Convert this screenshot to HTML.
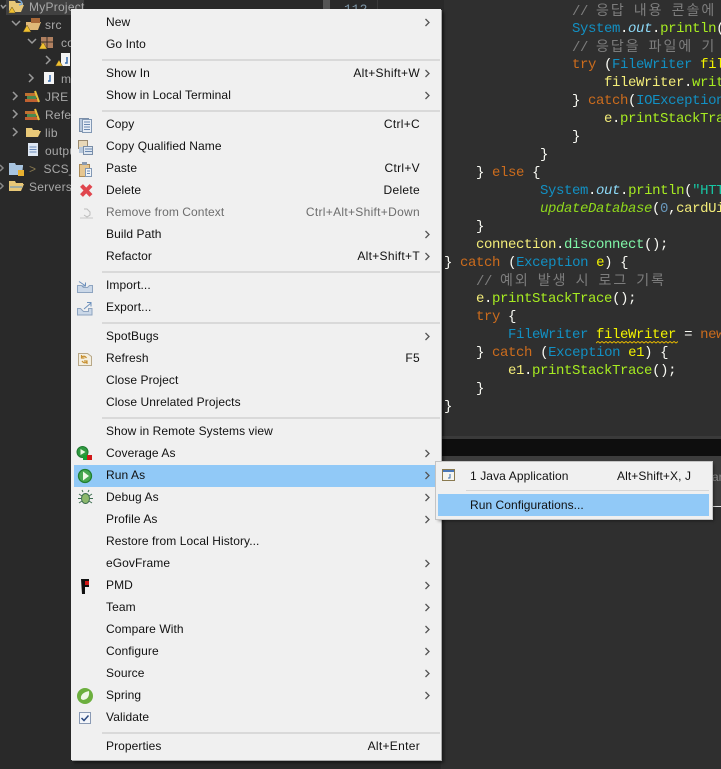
<!DOCTYPE html>
<html><head><meta charset="utf-8"><style>
html,body{margin:0;padding:0;background:#2f2f2f}
#r{position:relative;width:721px;height:769px;overflow:hidden;background:#2f2f2f}
.a{position:absolute}
#c div{position:absolute;white-space:pre;font:14px/18px "Liberation Mono",monospace;letter-spacing:-.4px;color:#d9e8f7;height:18px}
.k{font-family:"Noto Sans CJK KR",sans-serif;font-size:14px;letter-spacing:2px}
.cm{color:#7d7d7d}.t{color:#1290c3}.kw{color:#cc6c1d}.m{color:#a7ec21}.v{color:#f3ec79}.d{color:#f2f200}.w{color:#f9faf4}.o{color:#8ddaf8;font-style:italic}.s{color:#17c6a3}.i{font-style:italic;color:#8fd81c}.n{color:#6897bb}.g{color:#80f6a7}
#t div{position:absolute;white-space:pre;font:12px/16px "Liberation Sans",sans-serif;color:#a8a8a8;letter-spacing:.25px}
#m{position:absolute;left:71px;top:9px;width:370px;height:751px;background:#f0f0f0;box-shadow:1px 1px 0 #aaa,3px 3px 3px rgba(0,0,0,.45)}
.x{position:absolute;left:106px;white-space:pre;font:12px/22px "Liberation Sans",sans-serif;color:#111;letter-spacing:.08px;height:22px}
.r{position:absolute;right:301px;white-space:pre;font:12px/22px "Liberation Sans",sans-serif;color:#111;letter-spacing:.3px;height:22px}
.sp{position:absolute;left:102px;width:338px;height:2px;background:#d9d9d9}
.h{position:absolute;background:#91c9f7}
</style></head><body><div id="r">
<div class="a" style="left:0;top:0;width:444px;height:769px;background:#292929"></div>
<div class="a" style="left:6px;top:0;width:78px;height:15px;background:#404040"></div>
<div class="a" style="left:323px;top:0;width:7px;height:12px;background:#555"></div>
<div class="a" style="left:377px;top:0;width:1px;height:12px;background:#3a3a3a"></div>
<div class="a" style="left:344px;top:3px;font:13px/14px 'Liberation Mono',monospace;color:#7f97a8">112</div>

<div id="c">
<div style="left:572px;top:1px"><span class="cm">// <span class="k">응답</span> <span class="k">내용</span> <span class="k">콘솔에</span></span></div>
<div style="left:572px;top:20px"><span class="t">System</span><span class="w">.</span><span class="o">out</span><span class="w">.</span><span class="m">println</span><span class="w">(</span></div>
<div style="left:572px;top:37px"><span class="cm">// <span class="k">응답을</span> <span class="k">파일에</span> <span class="k">기</span></span></div>
<div style="left:572px;top:56px"><span class="kw">try</span> <span class="w">(</span><span class="t">FileWriter</span> <span class="d">fil</span></div>
<div style="left:604px;top:74px"><span class="v">fileWriter</span><span class="w">.</span><span class="m">writ</span></div>
<div style="left:572px;top:92px"><span class="w">}</span> <span class="kw">catch</span><span class="w">(</span><span class="t">IOException</span></div>
<div style="left:604px;top:110px"><span class="v">e</span><span class="w">.</span><span class="m">printStackTra</span></div>
<div style="left:572px;top:128px"><span class="w">}</span></div>
<div style="left:540px;top:146px"><span class="w">}</span></div>
<div style="left:476px;top:164px"><span class="w">}</span> <span class="kw">else</span> <span class="w">{</span></div>
<div style="left:540px;top:182px"><span class="t">System</span><span class="w">.</span><span class="o">out</span><span class="w">.</span><span class="m">println</span><span class="w">(</span><span class="s">"HTT</span></div>
<div style="left:540px;top:200px"><span class="i">updateDatabase</span><span class="w">(</span><span class="n">0</span><span class="w">,</span><span class="v">cardUi</span></div>
<div style="left:476px;top:218px"><span class="w">}</span></div>
<div style="left:476px;top:236px"><span class="v">connection</span><span class="w">.</span><span class="g">disconnect</span><span class="w">();</span></div>
<div style="left:444px;top:254px"><span class="w">}</span> <span class="kw">catch</span> <span class="w">(</span><span class="t">Exception</span> <span class="d">e</span><span class="w">) {</span></div>
<div style="left:476px;top:271px"><span class="cm">// <span class="k">예외</span> <span class="k">발생</span> <span class="k">시</span> <span class="k">로그</span> <span class="k">기록</span></span></div>
<div style="left:476px;top:290px"><span class="v">e</span><span class="w">.</span><span class="m">printStackTrace</span><span class="w">();</span></div>
<div style="left:476px;top:308px"><span class="kw">try</span> <span class="w">{</span></div>
<div style="left:508px;top:326px"><span class="t">FileWriter</span> <span class="d">fileWriter</span> <span class="w">=</span> <span class="kw">new</span></div>
<div style="left:476px;top:344px"><span class="w">}</span> <span class="kw">catch</span> <span class="w">(</span><span class="t">Exception</span> <span class="d">e1</span><span class="w">) {</span></div>
<div style="left:508px;top:362px"><span class="v">e1</span><span class="w">.</span><span class="m">printStackTrace</span><span class="w">();</span></div>
<div style="left:476px;top:380px"><span class="w">}</span></div>
<div style="left:444px;top:398px"><span class="w">}</span></div>
</div>
<svg class="a" style="left:596px;top:341px" width="82" height="4"><path d="M0 2l2-1.500 2 1.500 2-1.500 2 1.500 2-1.500 2 1.500 2-1.500 2 1.500 2-1.500 2 1.500 2-1.500 2 1.500 2-1.500 2 1.500 2-1.500 2 1.500 2-1.500 2 1.500 2-1.500 2 1.500 2-1.500 2 1.500 2-1.500 2 1.500 2-1.500 2 1.500 2-1.500 2 1.500 2-1.500 2 1.500 2-1.500 2 1.500 2-1.500 2 1.500 2-1.500 2 1.500 2-1.500 2 1.500 2-1.500 2 1.500 2-1.500" fill="none" stroke="#e6b800" stroke-width="1"/></svg>

<div class="a" style="left:441px;top:436px;width:280px;height:3px;background:#3a3a3a"></div>
<div class="a" style="left:441px;top:439px;width:280px;height:17px;background:#0e0e0e"></div>
<div class="a" style="left:441px;top:456px;width:280px;height:50px;background:#3c3c3c"></div>
<div class="a" style="left:441px;top:506px;width:280px;height:1px;background:#e0e0e0"></div>
<div class="a" style="left:441px;top:507px;width:280px;height:262px;background:#2f2f2f"></div>
<div class="a" style="left:712px;top:469px;font:12px/16px 'Liberation Sans',sans-serif;color:#888">ar</div>

<div id="t">
<div style="left:29px;top:-1px">MyProject</div>
<div style="left:45px;top:17px">src</div>
<div style="left:61px;top:35px">co</div>
<div style="left:61px;top:71px">m</div>
<div style="left:45px;top:89px">JRE S</div>
<div style="left:45px;top:107px">Refer</div>
<div style="left:45px;top:125px">lib</div>
<div style="left:45px;top:143px">outpu</div>
<div style="left:29px;top:161px;color:#8a7a50">&gt;  <span style="color:#a8a8a8">SCS_2</span></div>
<div style="left:29px;top:179px">Servers</div>
</div>

<svg class="a" style="left:0;top:0" width="80" height="200" fill="none">
<g stroke="#9a9a9a" stroke-width="1.500"><path d="M1 5l2 3 3-3M12 21l4 4 4-4M28 39l4 4 4-4M46 56l4 4-4 4M29 74l4 4-4 4M13 92l4 4-4 4M13 110l4 4-4 4M13 128l4 4-4 4"/></g>
<path d="M0 165l3 3-3 3M0 183l3 3-3 3" stroke="#888" stroke-width="1.500"/>
<path d="M9 1h6l1 2h7v3H9zM9 5h15l-3 7H9z" fill="#e8c878"/>
<path d="M18 0q4 1 4 4l-3 1" stroke="#7aa8d8" stroke-width="1.500"/>
<path d="M12 7l3.500 6h-7z" fill="#f0c030" stroke="#5a4a20" stroke-width=".5"/>
<path d="M26 22h15l-3 8H26z" fill="#e0b878"/><path d="M31 18h9v5h-9z" fill="#a86838"/>
<path d="M27 25l4 7h-8z" fill="#f0c030" stroke="#5a4a20" stroke-width=".5"/>
<path d="M41 37h12v11H41z" fill="#b08060"/><path d="M47 37v11M41 42h12" stroke="#3a3028"/>
<path d="M43 42l4 7h-8z" fill="#f0c030" stroke="#5a4a20" stroke-width=".5"/>
<rect x="61" y="53" width="9" height="13" fill="#f4f4f4"/><path d="M67 57v6h-2" stroke="#3a6fb0" stroke-width="1.500"/>
<path d="M59 60l3.500 6h-7z" fill="#f0c030" stroke="#5a4a20" stroke-width=".5"/>
<rect x="44" y="72" width="10" height="12" fill="#f4f4f4"/><path d="M50 75v6h-2" stroke="#3a6fb0" stroke-width="1.500"/>
<path d="M25 93h11v3H25z" fill="#c07030"/><path d="M27 96h9v3h-9z" fill="#4a8a50"/><path d="M25 99h14v3H25z" fill="#c06030"/><path d="M35 91l4 11" stroke="#e8c040" stroke-width="2"/>
<path d="M25 111h11v3H25z" fill="#c07030"/><path d="M27 114h9v3h-9z" fill="#4a8a50"/><path d="M25 117h14v3H25z" fill="#c06030"/><path d="M35 109l4 11" stroke="#e8c040" stroke-width="2"/>
<path d="M26 128h6l1 2h6v2H26zM26 131h15l-3 6H26z" fill="#e8c878"/>
<rect x="28" y="143" width="10" height="13" fill="#dfe8f4"/><path d="M29.500 147h7M29.500 149.500h7M29.500 152h7" stroke="#6a8ab8"/>
<path d="M9 163h6l1 2h7v2H9zM9 166h14l-1 9H9z" fill="#a8c4e0"/><rect x="18" y="170" width="6" height="6" fill="#e8b030"/>
<path d="M9 181h6l1 2h7v2H9zM9 184h15l-3 7H9z" fill="#e8c878"/><path d="M10 187h12" stroke="#5a90c8"/>
</svg>

<div id="m"></div>
<div class="h" style="left:74px;top:465px;width:366px;height:22px"></div>

<div class="sp" style="top:59px"></div><div class="sp" style="top:110px"></div><div class="sp" style="top:271px"></div><div class="sp" style="top:322px"></div><div class="sp" style="top:417px"></div><div class="sp" style="top:732px"></div>

<div class="x" style="top:11px">New</div>
<div class="x" style="top:33px">Go Into</div>
<div class="x" style="top:62px">Show In</div><div class="r" style="top:62px">Alt+Shift+W</div>
<div class="x" style="top:84px">Show in Local Terminal</div>
<div class="x" style="top:113px">Copy</div><div class="r" style="top:113px">Ctrl+C</div>
<div class="x" style="top:135px">Copy Qualified Name</div>
<div class="x" style="top:157px">Paste</div><div class="r" style="top:157px">Ctrl+V</div>
<div class="x" style="top:179px">Delete</div><div class="r" style="top:179px">Delete</div>
<div class="x" style="top:201px;color:#6d6d6d">Remove from Context</div><div class="r" style="top:201px;color:#6d6d6d">Ctrl+Alt+Shift+Down</div>
<div class="x" style="top:223px">Build Path</div>
<div class="x" style="top:245px">Refactor</div><div class="r" style="top:245px">Alt+Shift+T</div>
<div class="x" style="top:274px">Import...</div>
<div class="x" style="top:296px">Export...</div>
<div class="x" style="top:325px">SpotBugs</div>
<div class="x" style="top:347px">Refresh</div><div class="r" style="top:347px">F5</div>
<div class="x" style="top:369px">Close Project</div>
<div class="x" style="top:391px">Close Unrelated Projects</div>
<div class="x" style="top:420px">Show in Remote Systems view</div>
<div class="x" style="top:442px">Coverage As</div>
<div class="x" style="top:464px">Run As</div>
<div class="x" style="top:486px">Debug As</div>
<div class="x" style="top:508px">Profile As</div>
<div class="x" style="top:530px">Restore from Local History...</div>
<div class="x" style="top:552px">eGovFrame</div>
<div class="x" style="top:574px">PMD</div>
<div class="x" style="top:596px">Team</div>
<div class="x" style="top:618px">Compare With</div>
<div class="x" style="top:640px">Configure</div>
<div class="x" style="top:662px">Source</div>
<div class="x" style="top:684px">Spring</div>
<div class="x" style="top:706px">Validate</div>
<div class="x" style="top:735px">Properties</div><div class="r" style="top:735px">Alt+Enter</div>

<svg class="a" style="left:0;top:0;pointer-events:none" width="721" height="769" fill="none">
<path d="M425.500 19l3.500 3.500-3.500 3.500M425.500 70l3.500 3.500-3.500 3.500M425.500 92l3.500 3.500-3.500 3.500M425.500 231l3.500 3.500-3.500 3.500M425.500 253l3.500 3.500-3.500 3.500M425.500 333l3.500 3.500-3.500 3.500M425.500 450l3.500 3.500-3.500 3.500M425.500 472l3.500 3.500-3.500 3.500M425.500 494l3.500 3.500-3.500 3.500M425.500 516l3.500 3.500-3.500 3.500M425.500 560l3.500 3.500-3.500 3.500M425.500 582l3.500 3.500-3.500 3.500M425.500 604l3.500 3.500-3.500 3.500M425.500 626l3.500 3.500-3.500 3.500M425.500 648l3.500 3.500-3.500 3.500M425.500 670l3.500 3.500-3.500 3.500M425.500 692l3.500 3.500-3.500 3.500" stroke="#555" stroke-width="1.300"/>
<!-- copy -->
<rect x="79.500" y="118.500" width="9" height="13" fill="#b8c8dc" stroke="#7a8ea8"/><rect x="82.500" y="119.500" width="9" height="13" fill="#e8eef6" stroke="#8298b4"/><path d="M84 122h6M84 124.500h6M84 127h6M84 129.500h6" stroke="#6a88b0"/>
<!-- copy qualified -->
<rect x="78.500" y="140.500" width="9" height="8" fill="#e8d8b8" stroke="#9a8a70"/><rect x="79" y="147" width="6" height="6" fill="#b8c8dc"/><rect x="83.500" y="146.500" width="9" height="8" fill="#dde6f0" stroke="#7a8ea8"/><path d="M85 149h7M85 151.500h7" stroke="#6a88b0"/>
<!-- paste -->
<rect x="79.500" y="164.500" width="10" height="12" fill="#e6c690" stroke="#a88a58"/><rect x="82" y="162" width="5" height="3" fill="#8a9ab0"/><rect x="85.500" y="168.500" width="6" height="8" fill="#f0f4f8" stroke="#8298b4"/><path d="M87 171h3M87 173.500h3" stroke="#6a88b0"/>
<!-- delete -->
<path d="M81.500 185.500l9.500 10M91 185.500l-9.500 10" stroke="#e0464e" stroke-width="4"/>
<!-- remove -->
<path d="M80 218h13" stroke="#c8c8c8"/><path d="M84 209h3l3 3v3l-3 2-3-2" stroke="#bcbcbc"/>
<!-- import -->
<path d="M77.500 285.500h4l2 2h4l2-2h3v7h-15z" fill="#cbd8e8" stroke="#8ea4c0"/><path d="M79 281.500l6 4M85.500 282.500v3.500h-3.500" stroke="#6c90bc"/>
<!-- export -->
<path d="M77.500 308.500h3l3 3h5v-3h3.500v6.500h-14.500z" fill="#cbd8e8" stroke="#8ea4c0"/><path d="M84 309l7-6M87 302.500h4v4" stroke="#6c90bc"/>
<!-- refresh -->
<path d="M78.500 353.500h9l4 3v9h-13z" fill="#f4efe0" stroke="#b8a888"/><path d="M81.500 357q3-2 5 1M87 362q-3 2-5-1M81.500 355v3h3M87 364v-3h-3" stroke="#c89030" stroke-width="1.200"/>
<!-- coverage -->
<circle cx="82.500" cy="452" r="5.500" fill="#2f9a40" stroke="#1f7a30"/><path d="M80.500 449l5 3-5 3z" fill="#e8f8e0"/><rect x="83" y="455" width="9" height="5" fill="#d01818"/><rect x="83" y="455" width="4" height="5" fill="#18a030"/>
<!-- run -->
<circle cx="85" cy="476" r="6.500" fill="#48a850" stroke="#1f7f30" stroke-width="1.300"/><path d="M83 471.500l6 4.500-6 4.500z" fill="#f0fae8"/>
<!-- debug -->
<ellipse cx="85.500" cy="498.500" rx="4" ry="5" fill="#8cb86c" stroke="#3e6e50"/><path d="M79 494l3 2M92 494l-3 2M78 498.500h3M93 498.500h-3M79 503l3-2M92 503l-3-2M83 492l-1-2M88 492l1-2" stroke="#3e6e50"/>
<!-- pmd -->
<path d="M81 579h8v8h-4v7h-3z" fill="#111"/><path d="M85 581h4v4h-4z" fill="#d01818"/>
<!-- spring -->
<circle cx="85" cy="696" r="8" fill="#6caf3e"/><path d="M81 699q-1-6 8-8q1 8-6 9z" fill="#f0f7e8"/>
<!-- validate -->
<rect x="79.500" y="712.500" width="11" height="11" fill="#f4f6fa" stroke="#8a9ab4"/><path d="M81.500 718l2.500 2.500 4.500-5" stroke="#2c4a80" stroke-width="1.500"/>
</svg>

<div class="a" style="left:436px;top:462px;width:276px;height:57px;background:#f0f0f0;box-shadow:0 0 0 1px #c4c4c4,2px 2px 3px rgba(0,0,0,.4)"></div>
<div class="a" style="left:466px;top:490px;width:243px;height:1px;background:#d6d6d6"></div>
<div class="h" style="left:438px;top:494px;width:271px;height:22px"></div>
<div class="x" style="left:470px;top:465px;letter-spacing:.1px">1 Java Application</div>
<div class="x" style="left:617px;top:465px;letter-spacing:.1px">Alt+Shift+X, J</div>
<div class="x" style="left:470px;top:494px;letter-spacing:.05px">Run Configurations...</div>
<svg class="a" style="left:441px;top:468px" width="16" height="16" fill="none"><rect x="1.500" y="1.500" width="12" height="11" fill="#f6f6f0" stroke="#8a7a50"/><rect x="2" y="2" width="11" height="2" fill="#4a78b8"/><path d="M9 6v4H7" stroke="#3a6fb0"/></svg>
</div></body></html>
